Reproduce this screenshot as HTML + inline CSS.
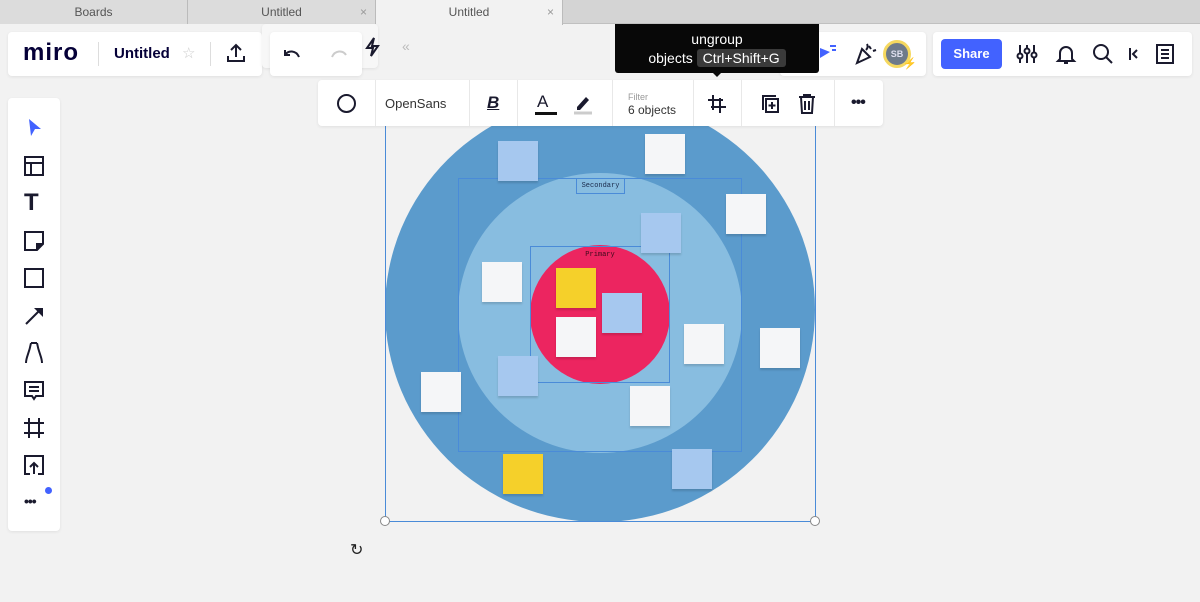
<!DOCTYPE html>
<html><head><meta charset="utf-8"><style>
*{margin:0;padding:0;box-sizing:border-box}
body{width:1200px;height:602px;overflow:hidden;background:#f2f2f2;font-family:"Liberation Sans",sans-serif;position:relative}
.abs{position:absolute}
.tab{position:absolute;top:0;height:24px;background:#dcdcdc;border-right:1px solid #bbb;font-size:12px;color:#555;text-align:center;line-height:24px}
.panel{position:absolute;background:#fff;border-radius:4px;box-shadow:0 1px 3px rgba(0,0,0,.08)}
.st{position:absolute;width:40px;height:40px;box-shadow:0 2px 2px rgba(0,0,0,.15)}
.w{background:#f5f6f8}.b{background:#a6c8ef}.y{background:#f5d02a}
svg.i{position:absolute;fill:none;stroke:#1a1a2e;stroke-width:2}
.sep{position:absolute;top:0;width:1px;height:46px;background:#e8e8e8}
</style></head><body>
<div class="abs" style="left:0;top:0;width:1200px;height:24px;background:#d4d4d4;border-bottom:1px solid #c0c0c0"></div>
<div class="tab" style="left:0;width:188px">Boards</div>
<div class="tab" style="left:188px;width:188px">Untitled<span style="position:absolute;right:8px;color:#999">×</span></div>
<div class="tab" style="left:376px;width:187px;background:#f2f2f2;height:25px">Untitled<span style="position:absolute;right:8px;color:#999">×</span></div>

<div class="panel" style="left:8px;top:32px;width:254px;height:44px"></div>
<div class="panel" style="left:262px;top:24px;width:116px;height:44px;background:#f7f7f7"></div>
<div class="panel" style="left:270px;top:32px;width:92px;height:44px"></div>
<div class="abs" style="left:23px;top:39px;font-size:24px;font-weight:bold;color:#050038;letter-spacing:1px">miro</div>
<div class="abs" style="left:98px;top:42px;width:1px;height:24px;background:#ddd"></div>
<div class="abs" style="left:114px;top:45px;font-size:15px;font-weight:bold;color:#050038">Untitled</div>
<div class="abs" style="left:182px;top:44px;font-size:15px;color:#ccc">☆</div>
<div class="abs" style="left:210px;top:42px;width:1px;height:24px;background:#ddd"></div>
<svg class="i" style="left:225px;top:42px" width="22" height="22"><path d="M11 15V3M6 8l5-5 5 5M3 14v5h16v-5"/></svg>
<svg class="i" style="left:281px;top:44px" width="22" height="20"><path d="M4 6v5h5M4 11c3-5 11-5 14 2"/></svg>
<svg class="i" style="left:328px;top:44px;stroke:#ccc" width="22" height="20"><path d="M18 11c-3-5-11-5-14 2"/></svg>
<svg class="i" style="left:362px;top:36px" width="20" height="22"><path d="M12 2L5 12h6l-2 8 7-10h-6z"/></svg>
<div class="abs" style="left:402px;top:38px;color:#bbb;font-size:14px">«</div>

<div class="panel" style="left:780px;top:32px;width:146px;height:44px"></div>
<svg class="abs" style="left:816px;top:42px" width="24" height="20"><path d="M4 6l10 4-10 6z" fill="#4262ff"/><path d="M14 4h6M16 8h4" stroke="#4262ff" stroke-width="2"/></svg>
<svg class="i" style="left:853px;top:42px" width="26" height="24"><path d="M4 21l5-14 8 8zM16 4l2 3M20 9l3-1M13 8c2-2 2-4 1-6"/></svg>
<div class="abs" style="left:883px;top:40px;width:28px;height:28px;border-radius:50%;background:#6e7a8a;border:3px solid #f5d860;color:#dde;font-size:9px;font-weight:bold;text-align:center;line-height:22px">SB</div>
<div class="abs" style="left:903px;top:57px;color:#f5c400;font-size:11px">⚡</div>

<div class="panel" style="left:933px;top:32px;width:259px;height:44px"></div>
<div class="abs" style="left:941px;top:39px;width:61px;height:30px;background:#4262ff;border-radius:4px;color:#fff;font-size:13px;font-weight:bold;text-align:center;line-height:30px">Share</div>
<svg class="i" style="left:1016px;top:43px" width="22" height="22"><path d="M4 2v18M11 2v18M18 2v18"/><circle cx="4" cy="13" r="2.5" fill="#fff"/><circle cx="11" cy="8" r="2.5" fill="#fff"/><circle cx="18" cy="12" r="2.5" fill="#fff"/></svg>
<svg class="i" style="left:1055px;top:43px" width="22" height="22"><path d="M5 16V10a6 6 0 0112 0v6l2 2H3zM9 20h4"/></svg>
<svg class="i" style="left:1092px;top:43px" width="22" height="22"><circle cx="9" cy="9" r="7"/><path d="M14 14l6 6"/></svg>
<svg class="i" style="left:1128px;top:46px" width="12" height="16"><path d="M2 2v12M9 4l-4 4 4 4"/></svg>
<svg class="i" style="left:1154px;top:43px" width="22" height="22"><rect x="3" y="2" width="16" height="18"/><path d="M7 7h8M7 11h8M7 15h8"/></svg>

<div class="abs" style="left:615px;top:24px;width:204px;height:49px;background:#080808;border-radius:0 0 3px 3px;color:#fff;font-size:14px;text-align:center;line-height:19px;padding-top:6px">ungroup<br>objects <span style="background:#3a3a3a;border-radius:3px;padding:1px 6px">Ctrl+Shift+G</span></div>
<div class="abs" style="left:712px;top:72px;width:0;height:0;border:5px solid transparent;border-top-color:#080808"></div>

<!-- canvas -->
<div class="abs" style="left:385px;top:97px;width:430px;height:425px;border-radius:50%;background:#5b9bcc"></div>
<div class="abs" style="left:458px;top:173px;width:284px;height:280px;border-radius:50%;background:#88bde0"></div>
<div class="abs" style="left:458px;top:178px;width:284px;height:274px;border:1px solid #4a8bd8"></div>
<div class="abs" style="left:530px;top:245px;width:140px;height:139px;border-radius:50%;background:#ec2560"></div>
<div class="abs" style="left:530px;top:246px;width:140px;height:137px;border:1px solid #4a8bd8"></div>
<div class="abs" style="left:576px;top:178px;width:49px;height:16px;border:1px solid #4a8bd8;font-family:'Liberation Mono',monospace;font-size:7px;color:#1a2a4a;text-align:center;line-height:15px">Secondary</div>
<div class="abs" style="left:580px;top:251px;width:40px;height:12px;font-family:'Liberation Mono',monospace;font-size:7px;color:#3a0a1a;text-align:center">Primary</div>
<div class="abs" style="left:385px;top:97px;width:431px;height:425px;border:1px solid #4a8bd8"></div>
<div class="abs" style="left:380px;top:516px;width:10px;height:10px;border-radius:50%;background:#fff;border:1px solid #888"></div>
<div class="abs" style="left:810px;top:516px;width:10px;height:10px;border-radius:50%;background:#fff;border:1px solid #888"></div>
<div class="abs" style="left:350px;top:540px;font-size:16px;color:#222">↻</div>

<div class="st b" style="left:498px;top:141px"></div>
<div class="st w" style="left:645px;top:134px"></div>
<div class="st w" style="left:726px;top:194px"></div>
<div class="st b" style="left:641px;top:213px"></div>
<div class="st w" style="left:482px;top:262px"></div>
<div class="st y" style="left:556px;top:268px"></div>
<div class="st b" style="left:602px;top:293px"></div>
<div class="st w" style="left:556px;top:317px"></div>
<div class="st w" style="left:684px;top:324px"></div>
<div class="st w" style="left:760px;top:328px"></div>
<div class="st b" style="left:498px;top:356px"></div>
<div class="st w" style="left:421px;top:372px"></div>
<div class="st w" style="left:630px;top:386px"></div>
<div class="st y" style="left:503px;top:454px"></div>
<div class="st b" style="left:672px;top:449px"></div>

<!-- context toolbar -->
<div class="panel" style="left:318px;top:80px;width:565px;height:46px">
<div class="sep" style="left:57px"></div><div class="sep" style="left:151px"></div><div class="sep" style="left:199px"></div><div class="sep" style="left:294px"></div><div class="sep" style="left:375px"></div><div class="sep" style="left:423px"></div><div class="sep" style="left:516px"></div>
</div>
<div class="abs" style="left:337px;top:94px;width:19px;height:19px;border-radius:50%;border:2px solid #1a1a2e"></div>
<div class="abs" style="left:385px;top:96px;font-size:13px;color:#333">OpenSans</div>
<div class="abs" style="left:487px;top:93px;font-size:17px;font-weight:bold;font-style:italic;color:#1a1a2e;text-decoration:underline">B</div>
<div class="abs" style="left:537px;top:92px;font-size:17px;color:#1a1a2e">A</div>
<div class="abs" style="left:535px;top:112px;width:22px;height:3px;background:#111"></div>
<svg class="abs" style="left:573px;top:93px" width="20" height="22"><path d="M4 14l9-10 3 3-9 10H4z" fill="#1a1a2e"/><path d="M1 20h18" stroke="#ccc" stroke-width="3"/></svg>
<div class="abs" style="left:628px;top:92px;font-size:9px;color:#999">Filter</div>
<div class="abs" style="left:628px;top:103px;font-size:12px;color:#333">6 objects</div>
<svg class="i" style="left:706px;top:93px" width="22" height="22"><path d="M7 2v15M2 7h15M14 5v15M5 14h15"/></svg>
<svg class="i" style="left:759px;top:93px" width="22" height="22"><path d="M4 17V3h13"/><rect x="7" y="6" width="12" height="13"/><path d="M13 9v7M9.5 12.5h7"/></svg>
<svg class="i" style="left:797px;top:93px" width="20" height="22"><path d="M2 4h16M7 4V2h6v2M4 4l1 16h10l1-16M8 8v9M12 8v9"/></svg>
<div class="abs" style="left:851px;top:94px;font-size:16px;font-weight:bold;color:#1a1a2e;letter-spacing:-1px">•••</div>

<!-- left toolbar -->
<div class="panel" style="left:8px;top:98px;width:52px;height:433px"></div>
<svg class="abs" style="left:27px;top:118px" width="16" height="20"><path d="M2 1l12 10h-6l-4 7z" fill="#4262ff"/></svg>
<svg class="i" style="left:23px;top:155px" width="22" height="22"><rect x="2" y="2" width="18" height="18"/><path d="M2 8h18M8 8v12"/></svg>
<div class="abs" style="left:24px;top:189px;font-size:24px;font-weight:bold;color:#1a1a2e">T</div>
<svg class="i" style="left:23px;top:230px" width="22" height="22"><path d="M2 2h18v12l-6 6H2z"/><path d="M14 20v-6h6" fill="#1a1a2e"/></svg>
<svg class="i" style="left:23px;top:267px" width="22" height="22"><rect x="2" y="2" width="18" height="18"/></svg>
<svg class="i" style="left:23px;top:304px" width="22" height="22"><path d="M3 20L18 5"/><path d="M11 4h9v9z" fill="#1a1a2e" stroke="none"/></svg>
<svg class="i" style="left:23px;top:341px" width="22" height="24"><path d="M3 22c0-6 3-9 5-20M19 22c0-6-3-9-5-20M8 2h6"/></svg>
<svg class="i" style="left:23px;top:380px" width="22" height="22"><path d="M2 2h18v14h-7l-2 3-2-3H2z"/><path d="M6 7h10M6 11h10"/></svg>
<svg class="i" style="left:23px;top:417px" width="22" height="22"><path d="M6 1v20M16 1v20M1 6h20M1 16h20"/></svg>
<svg class="i" style="left:23px;top:454px" width="22" height="22"><path d="M7 20H2V2h18v18h-5M11 20V9M7 13l4-4 4 4"/></svg>
<div class="abs" style="left:24px;top:493px;font-size:14px;font-weight:bold;color:#1a1a2e;letter-spacing:-1px">•••</div>
<div class="abs" style="left:45px;top:487px;width:7px;height:7px;border-radius:50%;background:#4262ff"></div>
</body></html>
